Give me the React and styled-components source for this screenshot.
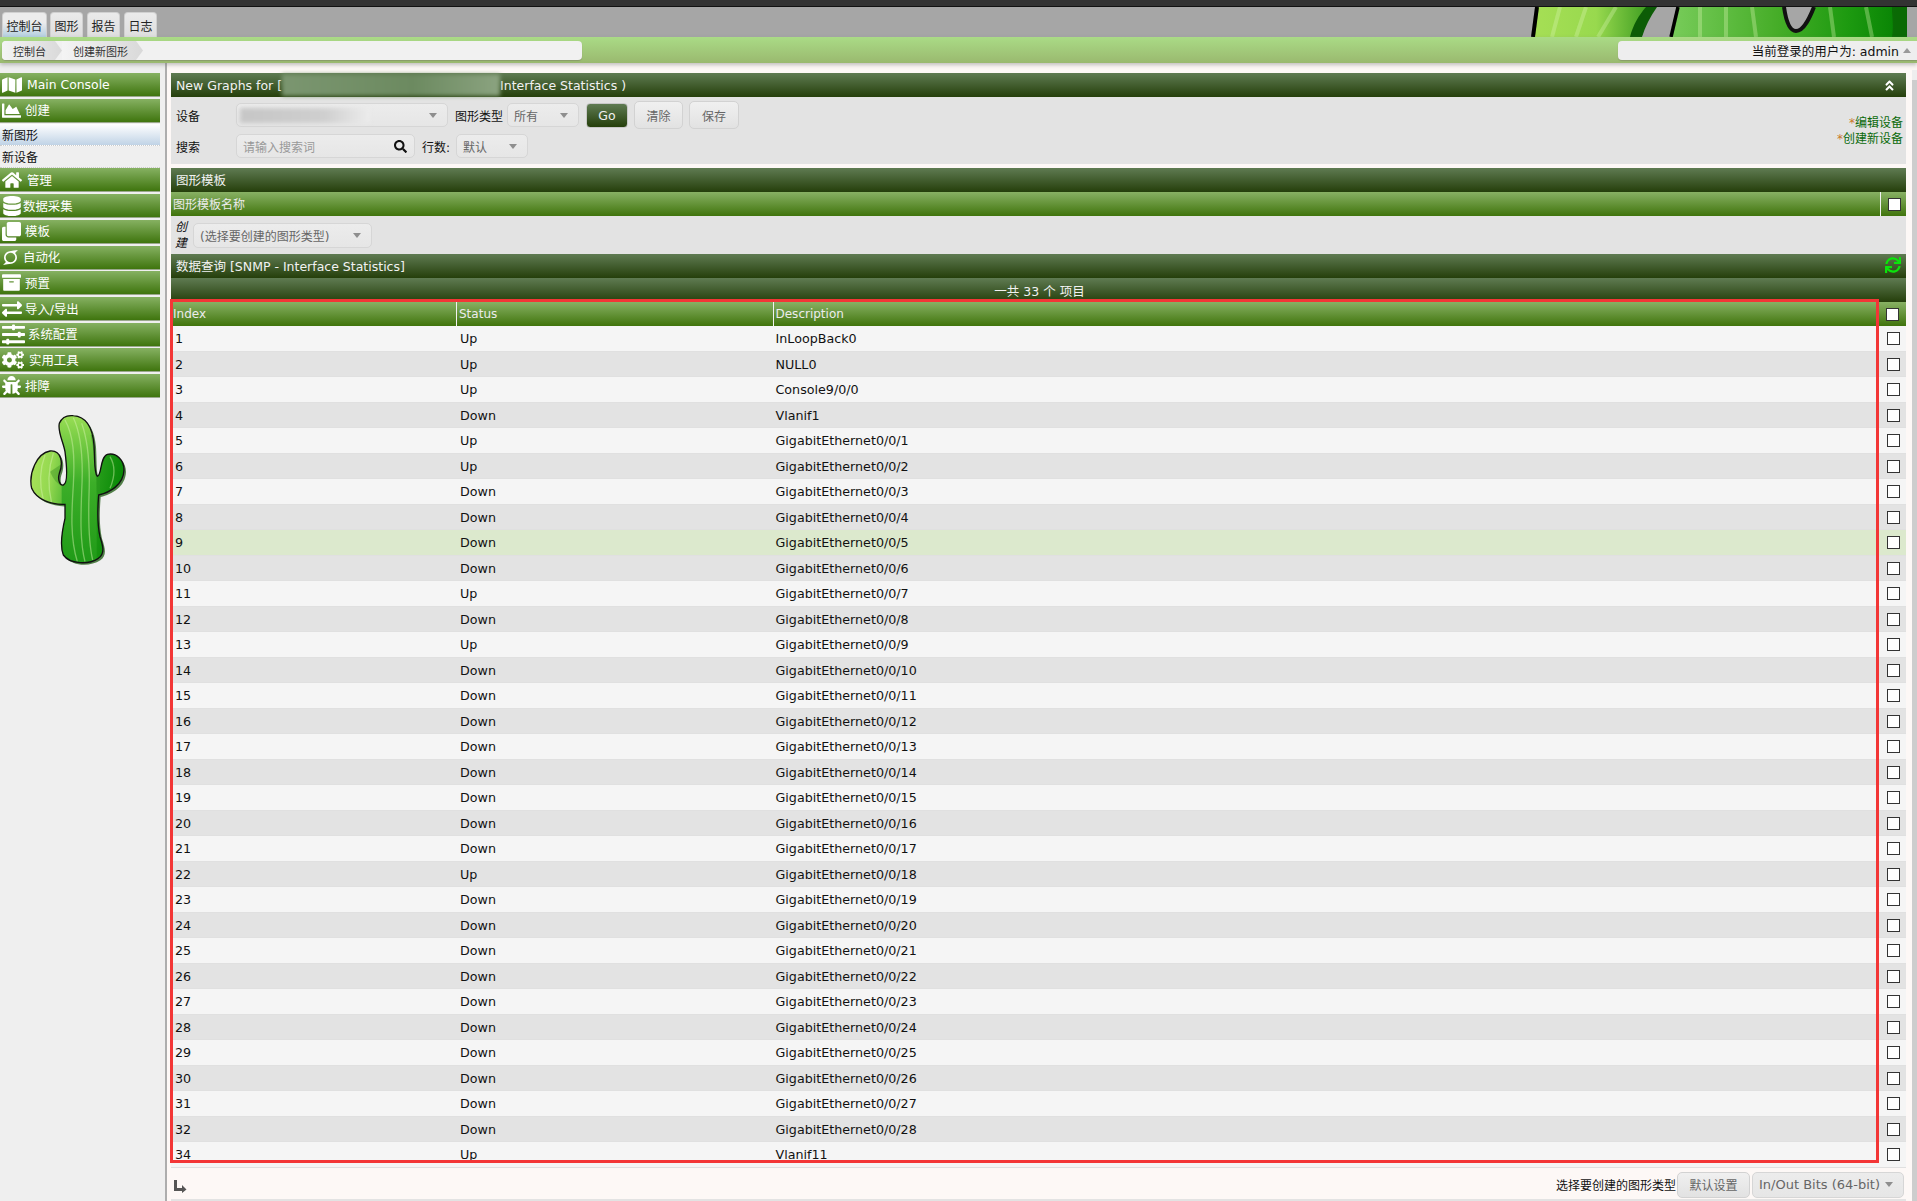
import React from "react";
import styled, { createGlobalStyle } from "styled-components";
import {
  FaMap, FaChartArea, FaHome, FaDatabase, FaClone, FaSuperpowers, FaArchive,
  FaExchangeAlt, FaSlidersH, FaCogs, FaBug, FaSearch, FaAngleDoubleUp, FaSync,
} from "react-icons/fa";

const Global = createGlobalStyle`
  html, body { margin: 0; padding: 0; height: 100%; overflow: hidden; background: #fdf8f6; }
  body { font-family: "DejaVu Sans", "Noto Sans CJK SC", sans-serif; font-size: 12px; color: #111; }
  * { box-sizing: border-box; }
`;

const Page = styled.div`
  width: 1917px; height: 1201px; display: flex; flex-direction: column; overflow: hidden; position: relative;
`;
const TopStrip = styled.div`
  height: 7px; background: #333; border-bottom: 1px solid #111; flex: none;
`;
const TabBar = styled.div`
  height: 30px; flex: none; background: #a6a6a6; display: flex; align-items: flex-end; padding: 5px 10px 0 2px; gap: 3px;
`;
const Tab = styled.div`
  width: ${p => p.$w}px; height: 25px; border-radius: 4px 4px 0 0; display: flex; align-items: center; justify-content: center;
  font-size: 12px; color: #222; border: 1px solid #d0d0d0; border-bottom: 0; margin-left: ${p => p.$ml || 0}px;
  background: ${p => p.$active ? "linear-gradient(#ececec 40%, #b4cfe0)" : "linear-gradient(#eaeaea, #dedede)"};
`;
const HeaderArt = styled.svg`
  margin-left: auto; width: 377px; height: 30px; display: block; flex: none;
`;
const CrumbBand = styled.div`
  height: 26px; flex: none; background: linear-gradient(#aadb86, #9ab96f); display: flex; justify-content: space-between;
  padding: 4px 0 3px 2px; box-shadow: 0 2px 4px rgba(120,120,120,.45); position: relative; z-index: 2;
`;
const Crumbs = styled.div`
  width: 580px; height: 19px; background: #f1f1f1; border-radius: 4px; display: flex; overflow: hidden; box-shadow: 0 1px 1px #8a9a6a;
`;
const Crumb = styled.div`
  width: ${p => p.$w}px; height: 100%; display: flex; align-items: center; padding-left: ${p => p.$pl}px; font-size: 11px; color: #333;
  background: linear-gradient(90deg, #f4f4f4, #d9d9d9);
  clip-path: polygon(0 0, calc(100% - 7px) 0, 100% 50%, calc(100% - 7px) 100%, 0 100%);
`;
const UserBar = styled.div`
  width: 299px; height: 19px; background: #eee; border-radius: 4px 0 0 4px; display: flex; align-items: center; justify-content: flex-end;
  padding-right: 6px; font-size: 12.5px; color: #111; box-shadow: 0 1px 1px #8a9a6a;
`;
const UserCaret = styled.span`
  width: 0; height: 0; border: 4px solid transparent; border-top: 0; border-bottom: 5px solid #999; margin-left: 4px;
`;
const Body = styled.div`
  flex: 1; display: flex; min-height: 0;
`;
const Sidebar = styled.nav`
  width: 167px; flex: none; background: #efefef; border-right: 2px solid #adadad; padding-top: 10px; display: flex; flex-direction: column;
`;
const MenuItem = styled.div`
  width: 160px; height: 24px; flex: none; margin-bottom: 1.72px; display: flex; align-items: center; color: #fff; font-size: 12.4px;
  background: linear-gradient(#86b162, #3f750e); border-bottom: 1px solid #9aa88c;
`;
const IconSlot = styled.span`
  width: ${p => p.$w}px; flex: none; padding-left: 2px; display: flex; align-items: center; font-size: ${p => p.$s || 20}px; line-height: 0;
`;
const SubItem = styled.div`
  width: 160px; height: 22px; flex: none; display: flex; align-items: center; padding-left: 2px; font-size: 12px; color: #111;
  border-bottom: 1px dotted #ccc;
  background: ${p => p.$active ? "linear-gradient(#fff, #c0d3e6)" : "transparent"};
`;
const SideCactus = styled.svg`
  width: 120px; height: 170px; margin: 5px 0 0 20px; flex: none; display: block;
`;
const Main = styled.main`
  width: 1735px; flex: none; margin-left: 4px; padding-top: 10px; display: flex; flex-direction: column;
`;
const DarkBar = styled.div`
  height: 24px; flex: none; display: flex; align-items: center; color: #f2f2f2; font-size: 12.5px;
  padding: 0 ${p => p.$center ? 5 : 10}px ${p => p.$lift ? 2 : 0}px ${p => p.$center ? 7 : 5}px;
  background: linear-gradient(#5f7b52, #253f0b); justify-content: ${p => p.$center ? "center" : "flex-start"};
`;
const TitleEnd = styled.span`
  margin-left: auto; margin-right: ${p => p.$mr || 0}px; display: flex; align-items: center; font-size: ${p => p.$s || 13}px; color: ${p => p.$c || "#fff"};
`;
const Redacted = styled.span`
  display: inline-block; width: ${p => p.$w}px; height: ${p => p.$h}px; flex: none; filter: blur(2px);
  background: ${p => p.$bg};
`;
const FilterPanel = styled.div`
  height: 67px; flex: none; background: #e3e3e3; display: flex; justify-content: space-between; padding: 6px 3px 0 5px;
`;
const FilterRows = styled.div`
  display: flex; flex-direction: column; gap: 7px;
`;
const FilterRow = styled.div`
  display: flex; align-items: center; height: 24px;
`;
const FieldLabel = styled.label`
  width: ${p => p.$w}px; flex: none; padding-left: ${p => p.$pl || 0}px; font-size: 12px; color: #111; white-space: nowrap;
`;
const SelectBox = styled.div`
  width: ${p => p.$w}px; height: ${p => p.$h || 24}px; flex: none; margin-left: ${p => p.$ml || 0}px; padding: 0 ${p => p.$pr || 10}px 0 ${p => p.$pl || 6}px;
  display: flex; align-items: center; justify-content: space-between; gap: 4px; color: #666; font-size: ${p => p.$fs || 12}px;
  background: linear-gradient(#ececec, #e6e6e6); border: 1px solid #d6d6d6; border-radius: 5px;
`;
const Caret = styled.span`
  width: 0; height: 0; flex: none; border: 4px solid transparent; border-bottom: 0; border-top: 5px solid #8e8e8e;
`;
const GoButton = styled.div`
  width: 42px; height: 25px; flex: none; margin-left: 7px; border-radius: 4px; display: flex; align-items: center; justify-content: center;
  color: #f0f0f0; font-size: 12.5px; background: linear-gradient(#5f7b52, #253f0b); border: 1px solid #c8c8c8;
`;
const PlainButton = styled.div`
  width: ${p => p.$w}px; height: ${p => p.$h || 28}px; flex: none; margin-left: ${p => p.$ml || 0}px; border-radius: 5px; display: flex; align-items: center; justify-content: center;
  color: #666; font-size: 12px; background: linear-gradient(#f0f0f0, #e2e2e2); border: 1px solid #d2d2d2;
`;
const SideLinks = styled.div`
  display: flex; flex-direction: column; align-items: flex-end; gap: 2px; padding-top: 13px; font-size: 12px; line-height: 14px; color: #0a6a0a;
`;
const Star = styled.span`
  color: #c9772a; font-size: 12px;
`;
const Gap = styled.div`
  height: 4px; flex: none;
`;
const GreenBar = styled.div`
  height: 24px; flex: none; display: grid; grid-template-columns: ${p => p.$cols}; align-items: stretch; color: #ececec; font-size: 12px;
  background: linear-gradient(#88b164, #40740c);
`;
const GreenCell = styled.div`
  display: flex; align-items: center; padding-left: ${p => p.$pl ?? 2}px; padding-bottom: ${p => p.$lift ? 2 : 0}px;
  border-left: ${p => p.$line ? "1px solid #f2f2f2" : "0"};
`;
const CheckCell = styled.div`
  display: flex; align-items: center; padding-left: ${p => p.$pl}px; border-left: ${p => p.$line ? "1px solid #f2f2f2" : "0"};
`;
const Check = styled.span`
  width: 13px; height: 13px; display: block; background: #fff; border: 1px solid #333; flex: none;
`;
const CreateRow = styled.div`
  height: 38px; flex: none; background: #e3e3e3; display: flex; align-items: center; padding: 0 0 0 4px;
`;
const CreateLabel = styled.em`
  width: 18px; flex: none; font-size: 12px; line-height: 16px; color: #111;
`;
const Table = styled.div`
  flex: none; display: flex; flex-direction: column;
`;
const Row = styled.div`
  height: 25.5px; flex: none; display: grid; grid-template-columns: 285px 316.5px 1107.5px 26px; align-items: center; font-size: 12.7px; color: #111;
  padding-top: 1px;
  background: ${p => p.$hl ? "#dce9cd" : p.$dark ? "#e3e3e3" : "#f5f5f5"};
  border-bottom: 1px solid #e0e0e0;
`;
const RowCell = styled.div`
  padding-left: ${p => p.$pl}px; white-space: nowrap; overflow: hidden;
`;
const Marker = styled.div`
  position: absolute; left: 170px; top: 299px; width: 1709px; height: 864px; border: 3px solid #f33636; pointer-events: none; z-index: 5;
`;
const Footer = styled.div`
  height: 31.5px; flex: none; display: flex; align-items: center; padding: 3px 2px 0 2px; font-size: 12px; color: #111;
`;
const FooterLabel = styled.span`
  margin-left: auto; margin-right: 1px;
`;
const BottomLine = styled.div`
  height: 2px; flex: none; background: #e3e3e3;
`;
const ScrollTrack = styled.div`
  width: 5px; flex: none; margin-left: 6px; margin-top: 7px; background: linear-gradient(#eee 10px, #cdcdcd 10px);
`;
const FooterArrow = styled.svg`
  flex: none; display: block; margin-top: 2px;
`;
const Placeholder = styled.span`
  color: #999;
`;

const CACTUS = "M160 32C200 35 218 70 222 120C225 170 222 205 232 214C245 214 240 155 262 148C290 142 312 165 312 195C310 240 270 262 236 270C232 320 232 360 240 395C250 425 255 445 235 460C205 480 150 478 130 450C118 420 128 370 135 340L135 298C95 300 50 285 35 250C25 205 50 145 90 138C125 135 130 175 118 205C112 225 120 242 130 240C145 235 140 180 135 140C130 110 112 80 118 55C125 38 140 30 160 32Z";

function Cactus() {
  return (
    <SideCactus viewBox="0 0 360 510">
      <defs>
        <linearGradient id="cg" x1="0" y1="0" x2="1" y2="0.25">
          <stop offset="0" stopColor="#b0e65c" />
          <stop offset="0.3" stopColor="#93d850" />
          <stop offset="0.55" stopColor="#3fae2a" />
          <stop offset="1" stopColor="#0b8a08" />
        </linearGradient>
        <linearGradient id="cb" x1="0" y1="0" x2="0" y2="1">
          <stop offset="0" stopColor="#9ade55" />
          <stop offset="0.45" stopColor="#3cae28" />
          <stop offset="1" stopColor="#1f9a17" />
        </linearGradient>
        <clipPath id="cc"><path d={CACTUS} /></clipPath>
      </defs>
      <path d={CACTUS} fill="#1c5a10" transform="translate(6 6)" opacity="0.75" />
      <path d={CACTUS} fill="url(#cg)" />
      <g clipPath="url(#cc)">
        <path d="M125 30H230V480H125Z" fill="url(#cb)" />
        <path d="M120 300C80 300 50 280 30 240L30 270L120 310Z" fill="#2f8a1e" opacity="0.6" />
        <path d="M90 200C100 220 110 240 135 245L135 170Z" fill="#4b9c2a" opacity="0.55" />
        <path d="M212 90C225 150 228 220 232 280L240 280L240 90Z" fill="#2f9720" opacity="0.5" />
        <g fill="none" stroke="#d8f4b0" strokeOpacity="0.45" strokeWidth="4">
          <path d="M135 45C160 90 165 150 160 240C155 320 150 400 172 470" />
          <path d="M160 38C185 90 190 170 185 260C182 340 180 410 195 470" />
          <path d="M185 55C205 110 210 190 207 270C205 340 205 410 218 465" />
          <path d="M75 150C60 190 58 240 70 285" />
          <path d="M100 145C85 190 82 240 95 295" />
          <path d="M270 155C285 180 285 215 270 250" />
        </g>
      </g>
      <path d={CACTUS} fill="none" stroke="#111" strokeWidth="4" />
    </SideCactus>
  );
}

function HeaderCactus() {
  return (
    <HeaderArt viewBox="0 0 377 30" preserveAspectRatio="none">
      <defs>
        <linearGradient id="ha" x1="0" y1="0" x2="1" y2="0">
          <stop offset="0" stopColor="#a6df55" />
          <stop offset="0.55" stopColor="#98d94e" />
          <stop offset="1" stopColor="#3f9e22" />
        </linearGradient>
        <linearGradient id="hb" x1="0" y1="0" x2="1" y2="0">
          <stop offset="0" stopColor="#78cc5a" />
          <stop offset="0.45" stopColor="#46ad28" />
          <stop offset="0.75" stopColor="#1d9a10" />
          <stop offset="1" stopColor="#047f02" />
        </linearGradient>
      </defs>
      <path d="M3 30L7 0H118C113 10 108 20 105 30Z" fill="url(#ha)" />
      <path d="M100 30C103 18 109 8 116 0H127C120 10 115 20 112 30Z" fill="#0c5c06" />
      <path d="M3 30L7 0" stroke="#000" strokeWidth="4" fill="none" />
      <path d="M141 30L148 0H377V30Z" fill="url(#hb)" />
      <path d="M141 30L148 0" stroke="#000" strokeWidth="3.5" fill="none" />
      <path d="M254 0C256 14 260 24 266 24C274 24 280 10 284 0Z" fill="#a6a6a6" />
      <path d="M254 0C256 14 260 24 266 24C274 24 280 10 284 0" fill="none" stroke="#111" strokeWidth="4" />
      <path d="M362 0C362 10 364 20 362 30H377V0Z" fill="#0b6405" opacity="0.8" />
      <g stroke="#d8f4b0" strokeOpacity="0.35" strokeWidth="4" fill="none">
        <path d="M30 0L22 30" /><path d="M56 0L46 30" /><path d="M86 0L68 30" />
        <path d="M170 0V30" /><path d="M196 0V30" /><path d="M222 0L226 30" /><path d="M300 0L304 30" /><path d="M336 0L342 30" />
      </g>
    </HeaderArt>
  );
}

const MENU = [
  { t: "Main Console", I: FaMap, w: 27 },
  { t: "创建", I: FaChartArea, w: 25, s: 19 },
  { sub: "新图形", active: true },
  { sub: "新设备" },
  { t: "管理", I: FaHome, w: 27 },
  { t: "数据采集", I: FaDatabase, w: 23 },
  { t: "模板", I: FaClone, w: 25, s: 19 },
  { t: "自动化", I: FaSuperpowers, w: 23, s: 17 },
  { t: "预置", I: FaArchive, w: 25, s: 19 },
  { t: "导入/导出", I: FaExchangeAlt, w: 25 },
  { t: "系统配置", I: FaSlidersH, w: 28, s: 23 },
  { t: "实用工具", I: FaCogs, w: 29, s: 22 },
  { t: "排障", I: FaBug, w: 25, s: 19 },
];

const ge = n => `GigabitEthernet0/0/${n}`;
const ROWS = [
  [1, "Up", "InLoopBack0"], [2, "Up", "NULL0"], [3, "Up", "Console9/0/0"], [4, "Down", "Vlanif1"],
  [5, "Up", ge(1)], [6, "Up", ge(2)], [7, "Down", ge(3)], [8, "Down", ge(4)], [9, "Down", ge(5)], [10, "Down", ge(6)],
  [11, "Up", ge(7)], [12, "Down", ge(8)], [13, "Up", ge(9)],
  ...Array.from({ length: 19 }, (_, i) => [14 + i, 14 + i === 22 ? "Up" : "Down", ge(10 + i)]),
  [34, "Up", "Vlanif11"],
];

export default function App() {
  return (
    <Page>
      <Global />
      <TopStrip />
      <TabBar>
        <Tab $w={45} $active>控制台</Tab>
        <Tab $w={33}>图形</Tab>
        <Tab $w={33} $ml={1}>报告</Tab>
        <Tab $w={33} $ml={1}>日志</Tab>
        <HeaderCactus />
      </TabBar>
      <CrumbBand>
        <Crumbs>
          <Crumb $w={60} $pl={11}>控制台</Crumb>
          <Crumb $w={81} $pl={11}>创建新图形</Crumb>
        </Crumbs>
        <UserBar>当前登录的用户为: admin<UserCaret /></UserBar>
      </CrumbBand>
      <Body>
        <Sidebar>
          {MENU.map(m => m.sub ? (
            <SubItem key={m.sub} $active={m.active}>{m.sub}</SubItem>
          ) : (
            <MenuItem key={m.t}>
              <IconSlot $w={m.w} $s={m.s}><m.I /></IconSlot>
              {m.t}
            </MenuItem>
          ))}
          <Cactus />
        </Sidebar>
        <Main>
          <DarkBar>
            New Graphs for [
            <Redacted $w={218} $h={22} $bg="linear-gradient(90deg, #7b9670, #6c8a60 60%, #8ba380 100%)" />
            Interface Statistics )
            <TitleEnd $s={13}><FaAngleDoubleUp /></TitleEnd>
          </DarkBar>
          <FilterPanel>
            <FilterRows>
              <FilterRow>
                <FieldLabel $w={60}>设备</FieldLabel>
                <SelectBox $w={212} $pl={3}>
                  <Redacted $w={130} $h={15} $bg="linear-gradient(90deg, #c6c6c6, #cfcfcf 65%, #ececec)" />
                  <Caret />
                </SelectBox>
                <FieldLabel $w={59} $pl={7}>图形类型</FieldLabel>
                <SelectBox $w={72}>所有<Caret /></SelectBox>
                <GoButton>Go</GoButton>
                <PlainButton $w={49} $ml={6}>清除</PlainButton>
                <PlainButton $w={50} $ml={6}>保存</PlainButton>
              </FilterRow>
              <FilterRow>
                <FieldLabel $w={60}>搜索</FieldLabel>
                <SelectBox $w={179} $pr={7}>
                  <Placeholder>请输入搜索词</Placeholder>
                  <FaSearch color="#111" size={13} />
                </SelectBox>
                <FieldLabel $w={41} $pl={7}>行数:</FieldLabel>
                <SelectBox $w={72}>默认<Caret /></SelectBox>
              </FilterRow>
            </FilterRows>
            <SideLinks>
              <span><Star>*</Star>编辑设备</span>
              <span><Star>*</Star>创建新设备</span>
            </SideLinks>
          </FilterPanel>
          <Gap />
          <DarkBar $lift>图形模板</DarkBar>
          <GreenBar $cols="1709px 26px">
            <GreenCell $lift>图形模板名称</GreenCell>
            <CheckCell $pl={7} $line><Check /></CheckCell>
          </GreenBar>
          <CreateRow>
            <CreateLabel>创建</CreateLabel>
            <SelectBox $w={179} $h={25}>(选择要创建的图形类型)<Caret /></SelectBox>
          </CreateRow>
          <DarkBar $lift>
            数据查询 [SNMP - Interface Statistics]
            <TitleEnd $s={16} $c="#0be40b" $mr={-5}><FaSync /></TitleEnd>
          </DarkBar>
          <DarkBar $center>一共 33 个 项目</DarkBar>
          <GreenBar $cols="285px 316.5px 1107.5px 26px">
            <GreenCell>Index</GreenCell>
            <GreenCell $line>Status</GreenCell>
            <GreenCell $line>Description</GreenCell>
            <CheckCell $pl={6}><Check /></CheckCell>
          </GreenBar>
          <Table>
            {ROWS.map((r, i) => (
              <Row key={r[0]} $dark={i % 2 === 1} $hl={r[0] === 9}>
                <RowCell $pl={4}>{r[0]}</RowCell>
                <RowCell $pl={4}>{r[1]}</RowCell>
                <RowCell $pl={3}>{r[2]}</RowCell>
                <CheckCell $pl={7}><Check /></CheckCell>
              </Row>
            ))}
          </Table>
          <Footer>
            <FooterArrow width="14" height="14" viewBox="0 0 14 14">
              <path d="M1 1H4V9H9V6L13.5 10.5L9 14V12H1Z" fill="#555" />
            </FooterArrow>
            <FooterLabel>选择要创建的图形类型</FooterLabel>
            <PlainButton $w={73} $h={26}>默认设置</PlainButton>
            <SelectBox $w={152} $h={26} $ml={2} $fs={13}>In/Out Bits (64-bit)<Caret /></SelectBox>
          </Footer>
          <BottomLine />
        </Main>
        <ScrollTrack />
      </Body>
      <Marker />
    </Page>
  );
}
